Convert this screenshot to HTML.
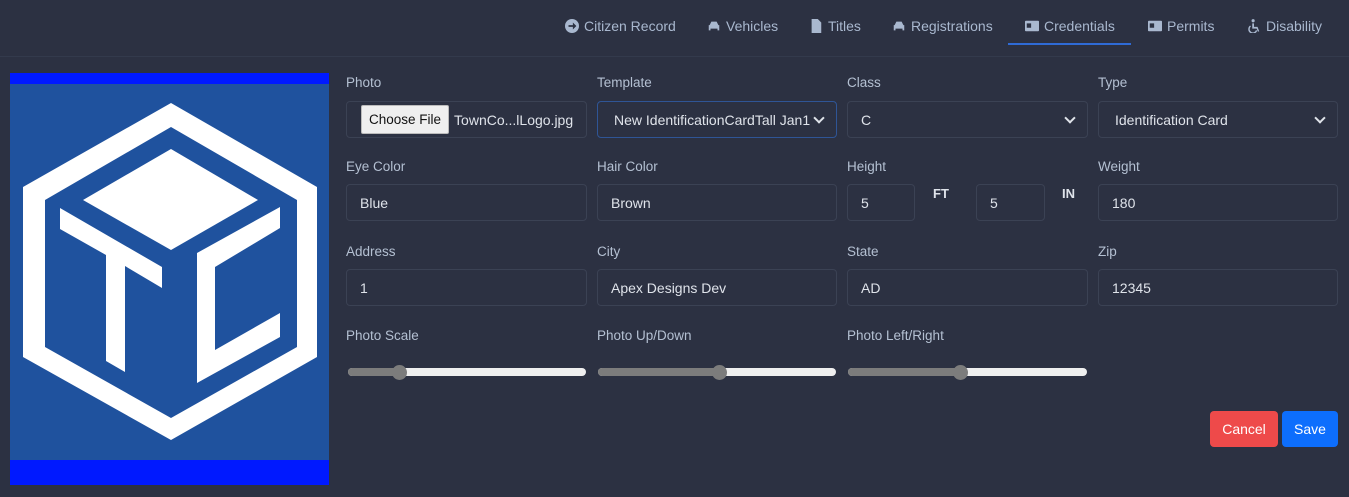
<!DOCTYPE html>
<html><head><meta charset="utf-8"><style>
*{box-sizing:border-box;margin:0;padding:0}
body{width:1349px;height:497px;background:#2c3142;font-family:"Liberation Sans",sans-serif;position:relative;overflow:hidden;color:#dfe3ea}
.hdr{position:absolute;left:0;top:0;width:1349px;height:57px;border-bottom:1px solid #333a4c}
.tab{position:absolute;top:18px;font-size:14px;color:#a9b8cf;white-space:nowrap;display:flex;align-items:center;gap:5px}
.tab svg{width:14px;height:14px;fill:#a9b8cf}
.ul{position:absolute;left:1008px;top:43px;width:123px;height:2px;background:#2f6bd6}
.lbl{position:absolute;font-size:13.5px;color:#b4c0d2}
.inp{position:absolute;height:37px;border:1px solid #3b4254;border-radius:4px;font-size:14px;color:#dfe3ea;padding-left:13px;display:flex;align-items:center}
.sel:after{content:"";position:absolute;right:13px;top:12px;width:6px;height:6px;border-right:2px solid #dfe3ea;border-bottom:2px solid #dfe3ea;transform:rotate(45deg)}
.track{position:absolute;height:8px;border-radius:4px;background:#efefef}
.fill{position:absolute;left:0;top:0;height:8px;border-radius:4px;background:#7c7c7c}
.thumb{position:absolute;top:-3px;width:15px;height:15px;border-radius:50%;background:#7c7c7c}
.btn{position:absolute;top:411px;height:36px;border-radius:4px;color:#fff;font-size:14px;display:flex;align-items:center;justify-content:center}
</style></head><body>
<div class="hdr">
<div class="tab" style="left:565px"><svg viewBox="0 0 16 16"><circle cx="8" cy="8" r="8"/><path d="M4 7h5V4l4 4-4 4V9H4z" fill="#2c3142"/></svg>Citizen Record</div>
<div class="tab" style="left:707px"><svg viewBox="0 0 16 16"><path d="M3 7l2-4h6l2 4h1v6h-2v-2H4v2H2V7z"/></svg>Vehicles</div>
<div class="tab" style="left:809px"><svg viewBox="0 0 16 16"><path d="M3 0h7l4 4v12H3z"/></svg>Titles</div>
<div class="tab" style="left:892px"><svg viewBox="0 0 16 16"><path d="M3 7l2-4h6l2 4h1v6h-2v-2H4v2H2V7z"/></svg>Registrations</div>
<div class="tab" style="left:1025px"><svg viewBox="0 0 16 16"><rect y="2" width="16" height="12" rx="1"/><rect x="2" y="5" width="5" height="5" fill="#2c3142"/></svg>Credentials</div>
<div class="tab" style="left:1148px"><svg viewBox="0 0 16 16"><rect y="2" width="16" height="12" rx="1"/><rect x="2" y="5" width="5" height="5" fill="#2c3142"/></svg>Permits</div>
<div class="tab" style="left:1247px"><svg viewBox="0 0 16 16"><circle cx="7" cy="2" r="1.8"/><path d="M6 5h2v4h4l2 5-1.5.5L11 11H6z"/><path d="M4 8a4.5 4.5 0 1 0 7 5" stroke="#a9b8cf" stroke-width="1.6" fill="none"/></svg>Disability</div>
<div class="ul"></div>
</div>

<svg style="position:absolute;left:10px;top:73px" width="319" height="412" viewBox="10 73 319 412">
<rect x="10" y="73" width="319" height="412" fill="#1f529e"/>
<rect x="10" y="73" width="319" height="11" fill="#0019ff"/>
<rect x="10" y="460" width="319" height="25" fill="#0019ff"/>
<path fill="#fff" fill-rule="evenodd" d="M171 103L317 187V357L171 440L23 357V187Z M171 127L45 200V347L171 418L297 347V200Z"/>
<path fill="#fff" d="M171 149L258 200L171 250L83 200Z"/>
<path fill="#fff" d="M60 208L162 267V288L125 266V372L106 361V255L60 229Z"/>
<path fill="#fff" d="M280 207V228L215 267V350L280 313V337L197 383V253Z"/>
</svg>

<div class="lbl" style="left:346px;top:75px">Photo</div>
<div class="inp" style="left:346px;top:101px;width:241px;padding-left:14px"><span style="background:#efefef;color:#111;border:1px solid #bbb;border-radius:2px;padding:6px 7px;font-size:13.5px;margin-right:5px">Choose File</span>TownCo...lLogo.jpg</div>
<div class="lbl" style="left:597px;top:75px">Template</div>
<div class="inp sel" style="left:597px;top:101px;width:240px;border-color:#2f5596;padding-left:16px">New IdentificationCardTall Jan1</div>
<div class="lbl" style="left:847px;top:75px">Class</div>
<div class="inp sel" style="left:847px;top:101px;width:241px">C</div>
<div class="lbl" style="left:1098px;top:75px">Type</div>
<div class="inp sel" style="left:1098px;top:101px;width:240px;padding-left:16px">Identification Card</div>

<div class="lbl" style="left:346px;top:159px">Eye Color</div>
<div class="inp" style="left:346px;top:184px;width:241px">Blue</div>
<div class="lbl" style="left:597px;top:159px">Hair Color</div>
<div class="inp" style="left:597px;top:184px;width:240px">Brown</div>
<div class="lbl" style="left:847px;top:159px">Height</div>
<div class="inp" style="left:847px;top:184px;width:68px;padding-left:13px">5</div>
<div class="lbl" style="left:933px;top:186px;color:#dfe3ea;font-weight:bold;font-size:13px">FT</div>
<div class="inp" style="left:976px;top:184px;width:69px">5</div>
<div class="lbl" style="left:1062px;top:186px;color:#dfe3ea;font-weight:bold;font-size:13px">IN</div>
<div class="lbl" style="left:1098px;top:159px">Weight</div>
<div class="inp" style="left:1098px;top:184px;width:240px">180</div>

<div class="lbl" style="left:346px;top:244px">Address</div>
<div class="inp" style="left:346px;top:269px;width:241px">1</div>
<div class="lbl" style="left:597px;top:244px">City</div>
<div class="inp" style="left:597px;top:269px;width:240px">Apex Designs Dev</div>
<div class="lbl" style="left:847px;top:244px">State</div>
<div class="inp" style="left:847px;top:269px;width:241px">AD</div>
<div class="lbl" style="left:1098px;top:244px">Zip</div>
<div class="inp" style="left:1098px;top:269px;width:240px">12345</div>

<div class="lbl" style="left:346px;top:328px">Photo Scale</div>
<div class="lbl" style="left:597px;top:328px">Photo Up/Down</div>
<div class="lbl" style="left:847px;top:328px">Photo Left/Right</div>
<div class="track" style="left:348px;top:368px;width:238px"><div class="fill" style="width:52px"></div><div class="thumb" style="left:44px"></div></div>
<div class="track" style="left:598px;top:368px;width:238px"><div class="fill" style="width:122px"></div><div class="thumb" style="left:114px"></div></div>
<div class="track" style="left:848px;top:368px;width:239px"><div class="fill" style="width:112px"></div><div class="thumb" style="left:105px"></div></div>

<div class="btn" style="left:1210px;width:68px;background:#ee4a4a">Cancel</div>
<div class="btn" style="left:1282px;width:56px;background:#0d6efd">Save</div>
</body></html>
